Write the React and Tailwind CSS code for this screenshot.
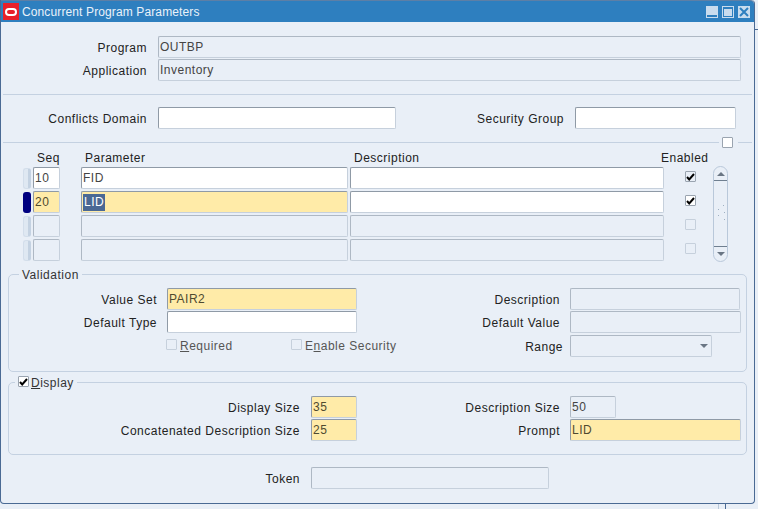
const tones = {
  off: 'bg-[#e9eff7] border-[#c6d0dc] border-t-[#aeb8c4] border-l-[#aeb8c4] text-[#444444]',
  white: 'bg-white border-[#c6d0dc] border-t-[#8f9aa6] border-l-[#8f9aa6] text-[#444444]',
  yellow: 'bg-[#ffeba8] border-[#c6d0dc] border-t-[#8f9aa6] border-l-[#8f9aa6] text-[#4f4a30]',
}

function Field({ tone = 'off', width, height = 'h-[22px]', children }) {
  return (
    <div className={`${width} ${height} ${tones[tone]} shrink-0 flex items-center border rounded-[2px] pl-[1px] leading-none`}>
      {children}
    </div>
  )
}

function Check({ checked, disabled, bg = 'bg-white', className = '' }) {
  return (
    <div className={`w-[11px] h-[11px] shrink-0 border rounded-[1px] flex items-center justify-center ${disabled ? 'border-[#c6d0dc]' : 'border-[#9aa4b0]'} ${bg} ${className}`}>
      {checked && (
        <svg width="9" height="8" viewBox="0 0 9 8">
          <path d="M1 4l2.2 2.4L8 1" fill="none" stroke="#000" strokeWidth="2" />
        </svg>
      )}
    </div>
  )
}

function Label({ width, children }) {
  return <div className={`${width} shrink-0 pt-[2px] text-right text-[#222222]`}>{children}</div>
}

function Row({ tone1, seq, param, selected, checked, checkBg }) {
  const off = !tone1
  return (
    <div className="flex items-center h-[24px]">
      <div className={`w-[8px] h-[21px] ml-[1px] mr-[2px] rounded-[3px] ${selected ? 'bg-[#000080]' : 'bg-[#dfe8f2] border border-[#d3deeb] border-r-[3px] border-r-[#c4d2e2]'}`} />
      <Field tone={tone1 || 'off'} width="w-[27px]">{seq}</Field>
      <div className="w-[21px]" />
      <Field tone={tone1 || 'off'} width="w-[267px]">
        {selected ? <span className="bg-[#4a6894] text-white h-[17px] flex items-center px-[1px]">{param}</span> : param}
      </Field>
      <div className="w-[2px]" />
      <Field tone={off ? 'off' : 'white'} width="w-[314px]" />
      <div className="w-[21px]" />
      <Check checked={checked} disabled={off} bg={off ? 'bg-[#e9eff7]' : checkBg} className="mb-[3px]" />
    </div>
  )
}

function WinButton({ children }) {
  return <div className="w-[12px] h-[12px] bg-[#c9dcee] flex items-center justify-center">{children}</div>
}

function Group({ title, height, titleLeft = 'left-[10px]', className = '', children }) {
  return (
    <div className={`relative mx-[7px] border border-[#c4d1e1] rounded-[5px] ${height} ${className}`}>
      <div className={`absolute -top-[8px] ${titleLeft} bg-[#e9eff7] px-[3px] h-[16px] flex items-center text-[#333333]`}>{title}</div>
      {children}
    </div>
  )
}

export default function App() {
  return (
    <div className="relative w-[758px] h-[509px] bg-[#e9eff7] overflow-hidden text-[12px] tracking-[0.5px] font-['Liberation_Sans',Arial,sans-serif]">
      {/* edges of the windows behind */}
      <div className="absolute left-[755px] top-[29px] w-[3px] border-t border-[#4a6a94]" />
      <div className="absolute left-[718px] top-[504px] h-[5px] border-l border-[#b9c8da]" />
      <div className="absolute left-[725px] top-[504px] h-[5px] border-l border-[#4a6a94]" />

      <div className="w-[755px] h-[504px] border border-t-0 border-[#4a6a94] rounded-b-[4px] rounded-tr-[4px] bg-[#e9eff7]">
        {/* title bar */}
        <div className="h-[22px] bg-[#2e7fbf] flex items-center pl-[2px] pr-[4px] text-[#eaf2fa] border-t border-[#5d7fa6] rounded-tr-[4px]">
          <div className="w-[16px] h-[17px] bg-[#e8202a] flex items-center justify-center mr-[3px]">
            <div className="w-[12px] h-[8px] rounded-full border-2 border-white" />
          </div>
          <span className="tracking-[0.12px]">Concurrent Program Parameters</span>
          <div className="ml-auto flex gap-[4px]">
            <WinButton>
              <div className="w-[10px] h-[2px] bg-[#2e7fbf] mt-[8px]" />
            </WinButton>
            <WinButton>
              <div className="w-[10px] h-[10px] border border-t-2 border-[#2e7fbf]" />
            </WinButton>
            <WinButton>
              <svg width="10" height="10" viewBox="0 0 10 10">
                <path d="M1 1l8 8M9 1l-8 8" stroke="#2e7fbf" strokeWidth="2" />
              </svg>
            </WinButton>
          </div>
        </div>

        {/* program */}
        <div className="flex items-center mt-[14px]">
          <Label width="w-[146px]">Program</Label>
          <div className="w-[11px]" />
          <Field width="w-[583px]">OUTBP</Field>
        </div>
        <div className="flex items-center mt-[1px]">
          <Label width="w-[146px]">Application</Label>
          <div className="w-[11px]" />
          <Field width="w-[583px]">Inventory</Field>
        </div>
        <div className="border-t border-[#c4d1e1] mx-[2px] mt-[13px]" />

        {/* conflicts */}
        <div className="flex items-center mt-[12px]">
          <Label width="w-[146px]">Conflicts Domain</Label>
          <div className="w-[11px]" />
          <Field tone="white" width="w-[238px]" />
          <Label width="w-[168px]">Security Group</Label>
          <div className="w-[11px]" />
          <Field tone="white" width="w-[161px]" />
        </div>

        {/* table */}
        <div className="flex items-center mt-[7px] h-[13px]">
          <div className="flex-1 border-t border-[#c4d1e1] ml-[2px]" />
          <Check bg="bg-white" className="ml-[3px] mr-[5px]" />
          <div className="w-[14px] border-t border-[#c4d1e1] mr-[2px]" />
        </div>
        <div className="flex items-end h-[18px] text-[#222222]">
          <div className="w-[36px] shrink-0" />
          <div className="w-[48px] shrink-0">Seq</div>
          <div className="w-[269px] shrink-0">Parameter</div>
          <div className="w-[307px] shrink-0">Description</div>
          <div>Enabled</div>
        </div>
        <div className="flex mt-[-3px]">
          <div className="ml-[21px] mt-[2px]">
            <Row tone1="white" seq="10" param="FID" checked checkBg="bg-[#e9eff7]" />
            <Row tone1="yellow" seq="20" param="LID" selected checked checkBg="bg-white" />
            <Row />
            <Row />
          </div>
          <div className="ml-[17px] w-[15px] h-[96px] mt-[2px] border border-[#b9c8da] rounded-full flex flex-col items-center justify-between">
            <div className="w-full h-[14px] border-b border-[#6f7f90] flex items-center justify-center">
              <div className="w-0 h-0 border-x-[4px] border-x-transparent border-b-[4px] border-b-[#6a7684]" />
            </div>
            <svg width="12" height="18" viewBox="0 0 12 18">
              <path d="M8 1l1-1M3 5l1-1M9 8l1-1M3 11l1-1M9 15l1-1" stroke="#9fb0c2" strokeWidth="1" />
            </svg>
            <div className="w-full h-[15px] border-t border-[#6f7f90] flex items-center justify-center">
              <div className="w-0 h-0 border-x-[4px] border-x-transparent border-t-[4px] border-t-[#6a7684]" />
            </div>
          </div>
        </div>

        {/* validation */}
        <Group title="Validation" height="h-[98px]" className="mt-[12px]">
          <div className="flex items-center mt-[13px]">
            <Label width="w-[148px]">Value Set</Label>
            <div className="w-[10px]" />
            <Field tone="yellow" width="w-[190px]">PAIR2</Field>
            <Label width="w-[203px]">Description</Label>
            <div className="w-[10px]" />
            <Field width="w-[170px]" />
          </div>
          <div className="flex items-center mt-[1px]">
            <Label width="w-[148px]">Default Type</Label>
            <div className="w-[10px]" />
            <Field tone="white" width="w-[190px]" />
            <Label width="w-[203px]">Default Value</Label>
            <div className="w-[10px]" />
            <Field width="w-[171px]" />
          </div>
          <div className="flex items-center mt-[2px] h-[22px]">
            <Check disabled bg="bg-[#e9eff7]" className="ml-[157px] mb-[3px]" />
            <span className="ml-[3px] text-[#555555] w-[111px]"><u>R</u>equired</span>
            <Check disabled bg="bg-[#e9eff7]" className="mb-[3px]" />
            <span className="ml-[3px] text-[#555555] w-[192px]">E<u>n</u>able Security</span>
            <Label width="w-[66px]">Range</Label>
            <div className="w-[7px]" />
            <Field width="w-[142px]">
              <div className="ml-auto mr-[3px] w-0 h-0 border-x-[4px] border-x-transparent border-t-[4px] border-t-[#6a7684]" />
            </Field>
          </div>
        </Group>

        {/* display */}
        <Group
          title={<span className="flex items-center gap-[2px]"><Check checked bg="bg-white" className="mb-[3px]" /><span><u>D</u>isplay</span></span>}
          titleLeft="left-[6px]"
          height="h-[73px]"
          className="mt-[10px]"
        >
          <div className="flex items-center mt-[13px]">
            <Label width="w-[291px]">Display Size</Label>
            <div className="w-[11px]" />
            <Field tone="yellow" width="w-[46px]">35</Field>
            <Label width="w-[203px]">Description Size</Label>
            <div className="w-[10px]" />
            <Field width="w-[46px]">50</Field>
          </div>
          <div className="flex items-center mt-[1px]">
            <Label width="w-[291px]">Concatenated Description Size</Label>
            <div className="w-[11px]" />
            <Field tone="yellow" width="w-[46px]">25</Field>
            <Label width="w-[203px]">Prompt</Label>
            <div className="w-[10px]" />
            <Field tone="yellow" width="w-[171px]">LID</Field>
          </div>
        </Group>

        {/* token */}
        <div className="flex items-center mt-[12px]">
          <Label width="w-[299px]">Token</Label>
          <div className="w-[11px]" />
          <Field width="w-[238px]" />
        </div>
      </div>
    </div>
  )
}
